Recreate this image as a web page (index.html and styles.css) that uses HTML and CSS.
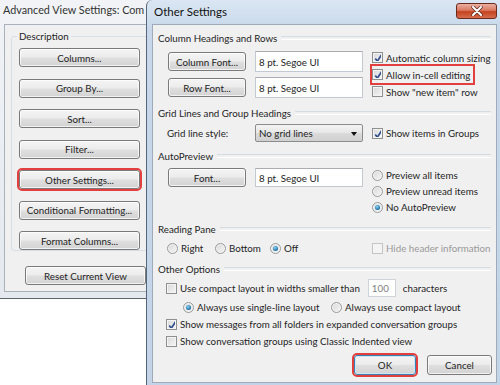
FILE: index.html
```html
<!DOCTYPE html>
<html lang="en">
<head>
  <meta charset="UTF-8">
  <title>Other Settings</title>
  <link rel="stylesheet" href="styles.css">
</head>
<body>
  <div class="desktop">

    <!-- background dialog -->
    <div class="window back">
      <div class="titlebar"><span>Advanced View Settings: Com</span></div>
      <div class="client">
        <div class="groupbox">
          <span class="group-label">Description</span>
          <div class="btn-list">
            <div class="btn wide">Columns...</div>
            <div class="btn wide">Group By...</div>
            <div class="btn wide">Sort...</div>
            <div class="btn wide">Filter...</div>
            <div class="btn wide marked">Other Settings...</div>
            <div class="btn wide">Conditional Formatting...</div>
            <div class="btn wide">Format Columns...</div>
          </div>
        </div>
        <div class="btn wide reset">Reset Current View</div>
      </div>
    </div>

    <!-- front dialog -->
    <div class="window front">
      <div class="titlebar">
        <span>Other Settings</span>
        <span class="close">
          <svg width="12" height="10" viewBox="0 0 12 10">
            <path d="M2 1 L10 9 M10 1 L2 9" stroke="#5a2a22" stroke-width="3.4" stroke-linecap="round"/>
            <path d="M2 1 L10 9 M10 1 L2 9" stroke="#fff" stroke-width="2" stroke-linecap="round"/>
          </svg>
        </span>
      </div>
      <div class="client">

        <div class="section-head h1"><span>Column Headings and Rows</span></div>
        <div class="block-a">
          <div class="font-rows">
            <div class="font-row">
              <div class="btn font-btn">Column Font...</div>
              <div class="textbox">8 pt. Segoe UI</div>
            </div>
            <div class="font-row">
              <div class="btn font-btn">Row Font...</div>
              <div class="textbox">8 pt. Segoe UI</div>
            </div>
          </div>
          <div class="option-list">
            <div class="opt"><span class="check on"></span>Automatic column sizing</div>
            <div class="opt marked"><span class="check on"></span>Allow in-cell editing</div>
            <div class="opt"><span class="check"></span>Show "new item" row</div>
          </div>
        </div>

        <div class="section-head h2"><span>Grid Lines and Group Headings</span></div>
        <div class="grid-row">
          <span class="field-label">Grid line style:</span>
          <div class="select">No grid lines<span class="arrow"></span></div>
          <div class="opt"><span class="check on"></span>Show items in Groups</div>
        </div>

        <div class="section-head h3"><span>AutoPreview</span></div>
        <div class="block-c">
          <div class="font-row">
            <div class="btn font-btn">Font...</div>
            <div class="textbox">8 pt. Segoe UI</div>
          </div>
          <div class="option-list tight">
            <div class="opt"><span class="radio"></span>Preview all items</div>
            <div class="opt"><span class="radio"></span>Preview unread items</div>
            <div class="opt"><span class="radio on"></span>No AutoPreview</div>
          </div>
        </div>

        <div class="section-head h4"><span>Reading Pane</span></div>
        <div class="pane-row">
          <div class="pane-radios">
            <div class="opt pane-right"><span class="radio"></span>Right</div>
            <div class="opt pane-bottom"><span class="radio"></span>Bottom</div>
            <div class="opt"><span class="radio on"></span>Off</div>
          </div>
          <div class="opt disabled"><span class="check"></span>Hide header information</div>
        </div>

        <div class="section-head h5"><span>Other Options</span></div>
        <div class="opt compact-row">
          <span class="check"></span>Use compact layout in widths smaller than
          <span class="textbox small">100</span>characters
        </div>
        <div class="layout-row">
          <div class="opt single"><span class="radio on"></span>Always use single-line layout</div>
          <div class="opt"><span class="radio"></span>Always use compact layout</div>
        </div>
        <div class="opt line-row"><span class="check on"></span>Show messages from all folders in expanded conversation groups</div>
        <div class="opt line-row"><span class="check"></span>Show conversation groups using Classic Indented view</div>

        <div class="dialog-buttons">
          <div class="btn ok marked">OK</div>
          <div class="btn cancel">Cancel</div>
        </div>
      </div>
    </div>

  </div>
</body>
</html>
```

FILE: styles.css
```css
* {
  margin: 0;
  padding: 0;
  box-sizing: border-box;
}
body {
  width: 500px;
  height: 385px;
  overflow: hidden;
  background: #fff;
  font-family: Lato, "Open Sans", sans-serif;
  font-size: 9.75px;
  color: #1e1e1e;
}

.desktop {
  position: relative;
  width: 500px;
  height: 385px;
}

/* windows */
.window {
  position: absolute;
  top: 0;
}

.back {
  left: 0;
  width: 300px;
  height: 299px;
  background: linear-gradient(#f1f3f6, #e4e9ef);
  border-bottom: 1px solid #5f656d;
}

.back .titlebar {
  height: 24px;
  padding: 3px 0 0 3px;
  white-space: nowrap;
  color: #333;
  font-size: 10.8px;
}

.back .client {
  margin-left: 4px;
  width: 290px;
  height: 268px;
  border: 1px solid #a9b1bc;
  background: #f0f0f0;
  padding: 11px 0 0 6px;
}

.groupbox {
  width: 270px;
  height: 215px;
  border: 1px solid #d5dfe5;
  border-radius: 3px;
  padding: 0 0 0 7px;
}

.group-label {
  display: inline-block;
  margin: -7px 0 0 -2px;
  padding: 0 2px;
  background: #f0f0f0;
  vertical-align: top;
  line-height: 12px;
}

.btn-list {
  display: flex;
  flex-direction: column;
  gap: 11.5px;
  margin-top: -1px;
}

/* buttons */
.btn {
  display: flex;
  align-items: center;
  justify-content: center;
  height: 19px;
  border: 1px solid #7a7a7a;
  border-radius: 3px;
  background: linear-gradient(#f4f4f4 0%, #ececec 48%, #dfdfdf 52%, #d3d3d3 100%);
  box-shadow: inset 0 0 0 1px rgba(255, 255, 255, 0.7);
  white-space: nowrap;
}

.btn.wide {
  width: 121px;
}

.reset {
  margin: 15px 0 0 14px;
}

.marked {
  outline: 2px solid #e2403e;
}

.btn.marked {
  outline-offset: 0;
}

.front {
  left: 146px;
  width: 354px;
  height: 400px;
  background: linear-gradient(#dae6f3, #c8d8ea 30px, #c3d4e8);
  border-left: 1px solid #56667a;
  border-radius: 6px 0 0 0;
}

.front .titlebar {
  display: flex;
  justify-content: space-between;
  height: 24px;
  padding: 5px 0 0 7px;
  font-size: 11.5px;
  color: #111;
}

.close {
  display: flex;
  align-items: center;
  justify-content: center;
  width: 41px;
  height: 16px;
  margin: -2px 3px 0 0;
  border: 1px solid #6b2a1e;
  border-radius: 3px;
  background: linear-gradient(#eab0a2 0%, #d97a62 45%, #c4421f 55%, #d66d4e 100%);
}

.front .client {
  margin-left: 5px;
  width: 345px;
  height: 359px;
  border: 1px solid #9faabb;
  background: #f0f0f0;
  padding-left: 5px;
}

/* section headings with etched line */
.section-head {
  display: flex;
  align-items: center;
  gap: 4px;
  height: 14px;
  margin-right: 5px;
}
.section-head::after {
  content: "";
  flex: 1;
  height: 2px;
  border-top: 1px solid #d5dbe3;
  border-bottom: 1px solid #fff;
}

.h1 { margin-top: 6px; }
.h2 { margin-top: 5.5px; }
.h3 { margin-top: 6px; }
.h4 { margin-top: 7px; }
.h5 { margin-top: 5.5px; }

/* column headings block */
.block-a,
.block-c {
  display: flex;
  margin-left: 10px;
}
.block-a { margin-top: 4px; height: 51px; }
.block-c { margin-top: 4px; height: 48px; }

.font-rows {
  display: flex;
  flex-direction: column;
  gap: 5px;
  padding-top: 2px;
}

.font-row {
  display: flex;
  align-items: center;
  gap: 9px;
  height: 21px;
}

.block-c .font-row {
  height: 19px;
  margin-top: 1px;
}

.font-btn {
  width: 78px;
}

.textbox {
  display: flex;
  align-items: center;
  width: 108px;
  height: 21px;
  padding-left: 3px;
  background: #fff;
  border: 1px solid #c2c9d2;
  border-top-color: #abadb3;
}
.block-c .textbox { height: 19px; }

.option-list {
  display: flex;
  flex-direction: column;
  margin-left: 9px;
}

.opt {
  display: flex;
  align-items: center;
  gap: 3px;
  height: 17px;
  white-space: nowrap;
}
.option-list .opt {
  align-self: flex-start;
  padding-right: 3px;
}
.tight .opt { height: 16px; }

/* checkbox & radio */
.check,
.radio {
  flex: none;
  width: 11px;
  height: 11px;
  border: 1px solid #8e8f8f;
  background: linear-gradient(135deg, #d8d8d8, #f6f6f6);
  box-shadow: inset 0 0 0 1px #f4f4f4;
}

.check.on {
  background-color: #f2f2f2;
  background-image: url("data:image/svg+xml,%3Csvg xmlns='http://www.w3.org/2000/svg' width='11' height='11' viewBox='0 0 11 11'%3E%3Cpath d='M2.3 5.6 L4.3 8.2 L8.6 1.8' fill='none' stroke='%23304f8c' stroke-width='1.7'/%3E%3C/svg%3E"), linear-gradient(135deg, #d8d8d8, #f6f6f6);
}

.radio {
  border-radius: 50%;
  border-color: #979a9c;
  position: relative;
}
.radio.on::after {
  content: "";
  position: absolute;
  left: 2px;
  top: 2px;
  width: 5px;
  height: 5px;
  border-radius: 50%;
  background: radial-gradient(circle at 40% 35%, #8ad3f2, #1c6ea6 70%, #0e4f80);
}

/* grid line row */
.grid-row {
  display: flex;
  align-items: center;
  height: 20px;
  margin-top: 3.5px;
  padding-left: 9px;
}
.field-label {
  width: 88px;
}
.select {
  position: relative;
  display: flex;
  align-items: center;
  width: 108px;
  height: 18px;
  padding-left: 3px;
  margin-right: 9px;
  border: 1px solid #8c8c8c;
  border-radius: 2px;
  background: linear-gradient(#f4f4f4, #e6e6e6 50%, #dadada 51%, #d0d0d0);
}
.arrow {
  position: absolute;
  right: 5px;
  top: 7px;
  border-left: 3.5px solid transparent;
  border-right: 3.5px solid transparent;
  border-top: 4px solid #111;
}

/* reading pane */
.pane-row {
  display: flex;
  align-items: center;
  margin-top: 3.5px;
  padding-left: 9px;
}
.pane-radios {
  display: flex;
  width: 205px;
}
.pane-right { width: 48px; }
.pane-bottom { width: 55px; }
.disabled { color: #9a9a9a; }
.disabled .check {
  border-color: #c5c5c5;
  background: #f4f4f4;
}

/* other options */
.compact-row {
  height: 18px;
  margin-top: 3px;
  padding-left: 8px;
}
.textbox.small {
  width: 28px;
  height: 18px;
  margin: 0 4px 0 5px;
  color: #7d7d7d;
  border-color: #cfd4da;
}
.layout-row {
  display: flex;
  margin-top: 1.5px;
  padding-left: 25px;
}
.single { width: 148px; }
.line-row {
  padding-left: 8px;
}
.line-row:first-of-type { margin-top: 1px; }

.dialog-buttons {
  display: flex;
  justify-content: flex-end;
  gap: 11px;
  margin: 5.5px 4px 0 0;
}
.ok {
  width: 62px;
  height: 20px;
  border-color: #3c7fb1;
  box-shadow: inset 0 0 0 1px #cbe6f7;
  outline-offset: 1px;
}
.cancel {
  width: 65px;
  height: 20px;
}
```
